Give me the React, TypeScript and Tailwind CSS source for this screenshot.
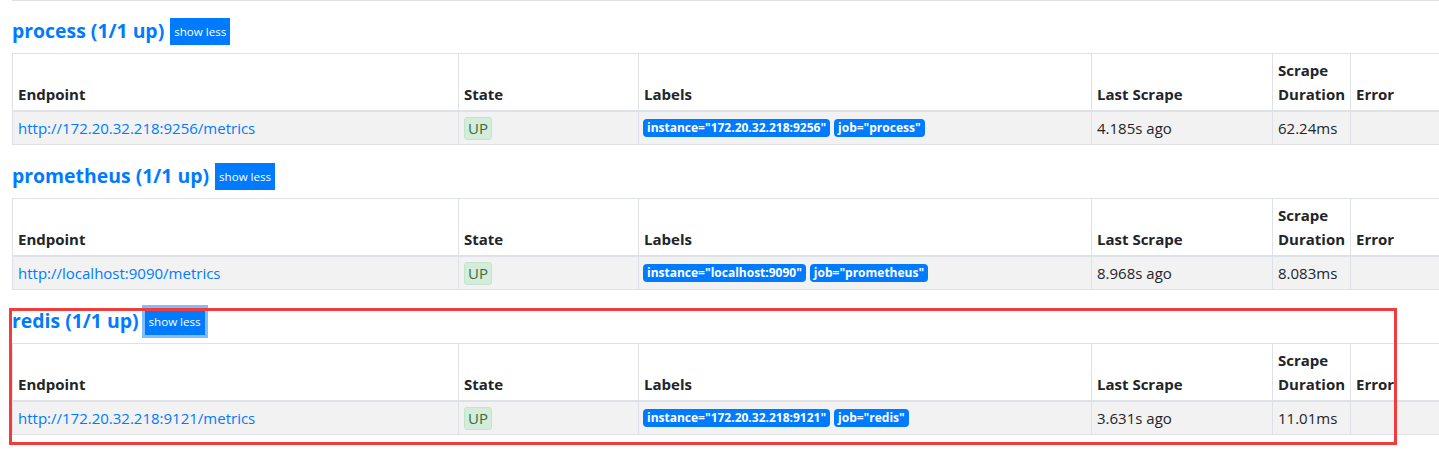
import React from "react";

type Target = {
  name: string;
  endpoint: string;
  labels: string[];
  lastScrape: string;
  duration: string;
  focused?: boolean;
};

const targets: Target[] = [
  {
    name: "process",
    endpoint: "http://172.20.32.218:9256/metrics",
    labels: ['instance="172.20.32.218:9256"', 'job="process"'],
    lastScrape: "4.185s ago",
    duration: "62.24ms",
  },
  {
    name: "prometheus",
    endpoint: "http://localhost:9090/metrics",
    labels: ['instance="localhost:9090"', 'job="prometheus"'],
    lastScrape: "8.968s ago",
    duration: "8.083ms",
  },
  {
    name: "redis",
    endpoint: "http://172.20.32.218:9121/metrics",
    labels: ['instance="172.20.32.218:9121"', 'job="redis"'],
    lastScrape: "3.631s ago",
    duration: "11.01ms",
    focused: true,
  },
];

const th = "border border-b-2 border-[#dee2e6] px-[5px] py-[4px] text-left align-bottom font-bold";
const td = "border border-[#dee2e6] px-[5px] py-[4px] align-top";

function Section({ t, first }: { t: Target; first?: boolean }) {
  return (
    <div className="relative">
      {t.focused ? (
        <div className="pointer-events-none absolute left-[-3px] top-[1px] h-[137px] w-[1388px] border-[3px] border-[#f23c3c]" />
      ) : null}
      <div className={`${first ? "mt-[16px]" : "mt-[17px]"} mb-[8px] flex h-[28px] items-center gap-[6px]`}>
        <h2 className="text-[19.4px] font-bold leading-[28px] text-[#007bff]">
          {t.name} (1/1 up)
        </h2>
        <button
          className={`h-[27px] bg-[#007bff] px-[4px] text-[11.6px] leading-[27px] text-white ${
            t.focused ? "outline-[3px] outline-solid outline-[#80bdff]" : ""
          }`}
        >
          show less
        </button>
      </div>
      <table className="w-[1440px] table-fixed border-collapse text-[15px] leading-[24px] text-[#212529]">
        <colgroup>
          <col className="w-[446px]" />
          <col className="w-[180px]" />
          <col className="w-[453px]" />
          <col className="w-[181px]" />
          <col className="w-[78px]" />
          <col />
        </colgroup>
        <thead>
          <tr>
            <th className={th}>Endpoint</th>
            <th className={th}>State</th>
            <th className={th}>Labels</th>
            <th className={th}>Last Scrape</th>
            <th className={th}>
              Scrape
              <br />
              Duration
            </th>
            <th className={th}>Error</th>
          </tr>
        </thead>
        <tbody>
          <tr className="bg-[#f2f2f2]">
            <td className={td}>
              <a className="text-[#007bff]" href="#">
                {t.endpoint}
              </a>
            </td>
            <td className={td}>
              <span className="inline-block rounded-[3px] border border-[#c3e6cb] bg-[#d4edda] px-[3px] leading-[21px] text-[#3b6b43]">
                UP
              </span>
            </td>
            <td className={td}>
              <div className="-ml-[1px] flex gap-[4px] pt-[3px]">
                {t.labels.map((l) => (
                  <span
                    key={l}
                    className="rounded-[4px] bg-[#007bff] px-[4px] text-[12px] font-bold leading-[18px] text-white"
                  >
                    {l}
                  </span>
                ))}
              </div>
            </td>
            <td className={td}>{t.lastScrape}</td>
            <td className={td}>{t.duration}</td>
            <td className={td}></td>
          </tr>
        </tbody>
      </table>
    </div>
  );
}

export default function App() {
  return (
    <div
      className="h-[456px] w-[1439px] overflow-hidden bg-white pl-[12px]"
      style={{ fontFamily: '"Open Sans", "Noto Sans", sans-serif' }}
    >
      <div className="h-px border-t border-[#dee2e6]" />
      {targets.map((t, i) => (
        <Section key={t.name} t={t} first={i === 0} />
      ))}
    </div>
  );
}
